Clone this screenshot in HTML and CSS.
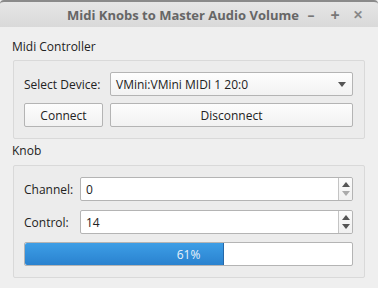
FILE: index.html
```html
<!DOCTYPE html>
<html>
<head>
<meta charset="utf-8">
<link rel="stylesheet" href="styles.css">
</head>
<body>
<div class="window">
  <div class="titlebar">
    <span class="title">Midi Knobs to Master Audio Volume</span>
    <span class="wbtn min">&#8211;</span>
    <span class="wbtn plus">+</span>
    <span class="wbtn close">&#10005;</span>
  </div>
  <div class="content">
    <div class="group-title">Midi Controller</div>
    <div class="group g1">
      <div class="row">
        <span class="label lab1">Select Device:</span>
        <div class="combo">
          <span>VMini:VMini MIDI 1 20:0</span>
          <svg class="arrow" width="8" height="5" viewBox="0 0 8 5"><path d="M0 0H8L4 5Z" fill="#555"/></svg>
        </div>
      </div>
      <div class="row">
        <div class="btn connect">Connect</div>
        <div class="btn disconnect">Disconnect</div>
      </div>
    </div>
    <div class="group-title">Knob</div>
    <div class="group g2">
      <div class="row">
        <span class="label lab2">Channel:</span>
        <div class="spin">
          <span class="val">0</span>
          <div class="spinbtns">
            <svg width="8" height="5" viewBox="0 0 8 5"><path d="M0 5H8L4 0Z" fill="#555"/></svg>
            <svg width="8" height="5" viewBox="0 0 8 5"><path d="M0 0H8L4 5Z" fill="#aaa"/></svg>
          </div>
        </div>
      </div>
      <div class="row">
        <span class="label lab2">Control:</span>
        <div class="spin">
          <span class="val">14</span>
          <div class="spinbtns">
            <svg width="8" height="5" viewBox="0 0 8 5"><path d="M0 5H8L4 0Z" fill="#555"/></svg>
            <svg width="8" height="5" viewBox="0 0 8 5"><path d="M0 0H8L4 5Z" fill="#555"/></svg>
          </div>
        </div>
      </div>
      <div class="progress">
        <div class="fill" style="width:61%"></div>
        <span class="ptext">61%</span>
      </div>
    </div>
  </div>
</div>
</body>
</html>
```
FILE: styles.css
```css
html, body {
  margin: 0;
  padding: 0;
  width: 378px;
  height: 288px;
  overflow: hidden;
  background: #efefef;
  font-family: "Open Sans", "Noto Sans", sans-serif;
  font-size: 12px;
  color: #222;
}
.window {
  width: 378px;
  height: 288px;
  display: flex;
  flex-direction: column;
}
.titlebar {
  height: 25px;
  border-top: 2px solid #8a8a8a;
  border-radius: 4px 4px 0 0;
  background: linear-gradient(#e6e6e6, #d9d9d9);
  display: flex;
  align-items: center;
  color: #666;
  font-weight: bold;
  font-size: 13px;
  flex-shrink: 0;
}
.title {
  margin-left: 67px;
  flex: 1;
}
.wbtn {
  color: #777;
  font-size: 14px;
  text-align: center;
}
.min { width: 14px; margin-right: 10px; }
.plus { width: 14px; margin-right: 9px; font-size: 16px; }
.close { width: 14px; margin-right: 13px; font-size: 12px; color: #888; }
.content {
  padding: 8px 13px 0 13px;
  display: flex;
  flex-direction: column;
}
.group-title {
  margin-left: -1px;
  height: 18px;
  line-height: 18px;
  margin-top: 3px;
}
.group {
  border: 1px solid #d9d9d9;
  background: #ececec;
  border-radius: 2px;
  padding: 11px 11px 11px 10px;
  display: flex;
  flex-direction: column;
  gap: 7px;
}
.g1 { margin-top: 4px; margin-bottom: 0; }
.g2 { margin-top: 5px; gap: 9px; padding-bottom: 11px; }
.row {
  display: flex;
  align-items: center;
  gap: 7px;
}
.label { flex-shrink: 0; }
.lab1 { width: 79px; }
.lab2 { width: 49px; }
.combo {
  flex: 1;
  height: 22px;
  border: 1px solid #b4b4b4;
  border-radius: 2px;
  background: linear-gradient(#fdfdfd, #f2f2f2);
  display: flex;
  align-items: center;
  padding-left: 5px;
  padding-right: 6px;
}
.combo span { flex: 1; }
.btn {
  height: 22px;
  border: 1px solid #b4b4b4;
  border-radius: 2px;
  background: linear-gradient(#fdfdfd, #f2f2f2);
  display: flex;
  align-items: center;
  justify-content: center;
}
.connect { width: 77px; }
.disconnect { flex: 1; }
.spin {
  flex: 1;
  height: 22px;
  border: 1px solid #b4b4b4;
  border-radius: 2px;
  background: #fff;
  display: flex;
  align-items: center;
}
.val { flex: 1; padding-left: 5px; }
.spinbtns {
  width: 13px;
  height: 22px;
  border-left: 1px solid #c4c4c4;
  background: linear-gradient(#fbfbfb, #f0f0f0);
  display: flex;
  flex-direction: column;
  align-items: center;
  justify-content: center;
  gap: 4px;
  border-radius: 0 2px 2px 0;
}
.progress {
  position: relative;
  height: 22px;
  border: 1px solid #b4b4b4;
  border-radius: 2px;
  background: #fff;
  margin-top: -1px;
}
.fill {
  height: 100%;
  background: linear-gradient(#3d9ee6, #2a82cf);
  border-right: 1px solid #2568a8;
  box-sizing: border-box;
  border-radius: 2px 0 0 2px;
}
.ptext {
  position: absolute;
  left: 0;
  right: 0;
  top: 0;
  bottom: 0;
  display: flex;
  align-items: center;
  justify-content: center;
  color: #e8f2fb;
}
```
